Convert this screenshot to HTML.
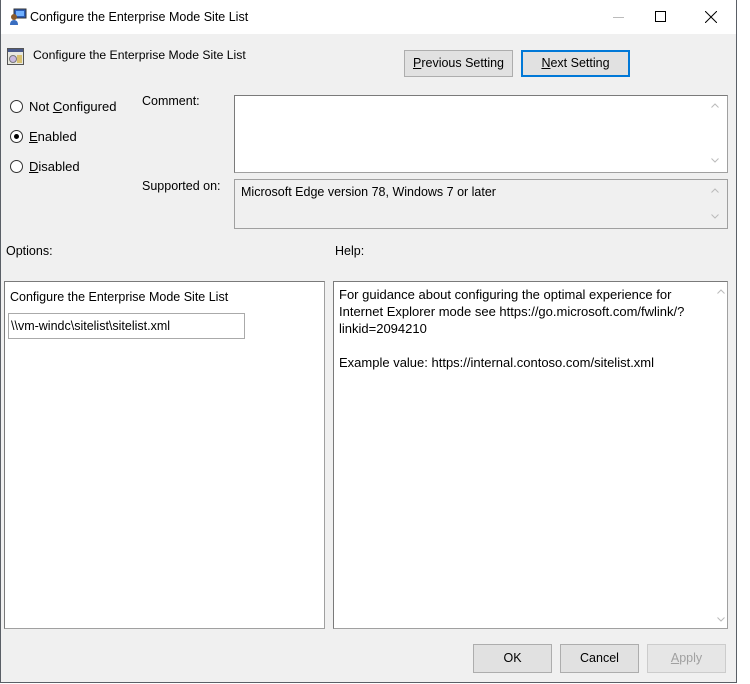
<!DOCTYPE html>
<html><head><meta charset="utf-8"><style>
*{box-sizing:border-box;margin:0;padding:0}
body{width:750px;height:684px;background:#fff;position:relative;overflow:hidden;font-family:"Liberation Sans",sans-serif;font-size:12px;color:#000}
.a{position:absolute}
.win{left:0;top:0;width:737px;height:683px;border:1px solid #5a5f66;border-top:none;background:#f0f0f0}
.tb{left:1px;top:0;width:735px;height:34px;background:#fff}
.btn{position:absolute;background:#e1e1e1;border:1px solid #adadad;text-align:center;line-height:25px;font-size:12.5px}
.box{position:absolute;background:#fff;border:1px solid #7a7a7a;border-right-color:#a0a0a0;border-bottom-color:#a0a0a0}
.rad{position:absolute;width:13px;height:13px;border:1px solid #333;border-radius:50%;background:#fff}
.lbl{position:absolute;font-size:12.5px;white-space:nowrap}
.sc{position:absolute}
u{text-decoration:underline}
</style></head><body>
<div class="a win"></div>
<div class="a tb"></div>
<svg class="a" style="left:9px;top:8px" width="18" height="18" viewBox="0 0 18 18"><rect x="5" y="1" width="12" height="9" fill="#2a5bb8" stroke="#333"/><rect x="7" y="3" width="8" height="5" fill="#6fb0ff"/><circle cx="5" cy="9" r="3" fill="#8a5a2a"/><path d="M1 17 Q1 12 5 12 Q9 12 9 17Z" fill="#3a6ec0"/></svg>
<div class="lbl" style="left:30px;top:10px;font-size:12.5px">Configure the Enterprise Mode Site List</div>
<div class="a" style="left:613px;top:17px;width:11px;height:1px;background:#bbb"></div>
<div class="a" style="left:655px;top:11px;width:11px;height:11px;border:1px solid #000"></div>
<svg class="a" style="left:705px;top:11px" width="12" height="12"><path d="M0 0L12 12M12 0L0 12" stroke="#000" stroke-width="1"/></svg>
<svg class="a" style="left:7px;top:48px" width="18" height="18" viewBox="0 0 18 18"><rect x="0.5" y="0.5" width="16" height="16" fill="#e8e8e0" stroke="#555"/><rect x="1" y="1" width="15" height="3" fill="#4a5a8a"/><circle cx="6" cy="11" r="3.5" fill="#c9b9e0" stroke="#777"/><rect x="10" y="7" width="5" height="8" fill="#d8c070"/></svg>
<div class="lbl" style="left:33px;top:48px;font-size:12.2px">Configure the Enterprise Mode Site List</div>
<div class="btn" style="left:404px;top:50px;width:109px;height:27px"><u>P</u>revious Setting</div>
<div class="btn" style="left:521px;top:50px;width:109px;height:27px;border:2px solid #0078d7;line-height:23px"><u>N</u>ext Setting</div>
<div class="rad" style="left:10px;top:100px"></div>
<div class="lbl" style="left:29px;top:99px;font-size:13px">Not <u>C</u>onfigured</div>
<div class="rad" style="left:10px;top:130px"></div>
<div class="a" style="left:14px;top:134px;width:5px;height:5px;border-radius:50%;background:#000"></div>
<div class="lbl" style="left:29px;top:129px;font-size:13px"><u>E</u>nabled</div>
<div class="rad" style="left:10px;top:160px"></div>
<div class="lbl" style="left:29px;top:159px;font-size:13px"><u>D</u>isabled</div>
<div class="lbl" style="left:142px;top:94px">Comment:</div>
<div class="box" style="left:234px;top:95px;width:494px;height:78px"></div>
<svg class="sc" style="left:711px;top:103px" width="8" height="5"><path d="M0.5 4.5L4 1L7.5 4.5" stroke="#bbb" fill="none"/></svg>
<svg class="sc" style="left:711px;top:158px" width="8" height="5"><path d="M0.5 0.5L4 4L7.5 0.5" stroke="#bbb" fill="none"/></svg>
<div class="lbl" style="left:142px;top:179px">Supported on:</div>
<div class="box" style="left:234px;top:179px;width:494px;height:50px;background:#f0f0f0;border-color:#a0a0a0"></div>
<div class="lbl" style="left:241px;top:185px">Microsoft Edge version 78, Windows 7 or later</div>
<svg class="sc" style="left:711px;top:188px" width="8" height="5"><path d="M0.5 4.5L4 1L7.5 4.5" stroke="#bbb" fill="none"/></svg>
<svg class="sc" style="left:711px;top:214px" width="8" height="5"><path d="M0.5 0.5L4 4L7.5 0.5" stroke="#bbb" fill="none"/></svg>
<div class="lbl" style="left:6px;top:244px">Options:</div>
<div class="lbl" style="left:335px;top:244px">Help:</div>
<div class="box" style="left:4px;top:281px;width:321px;height:348px"></div>
<div class="lbl" style="left:10px;top:290px">Configure the Enterprise Mode Site List</div>
<div class="box" style="left:8px;top:313px;width:237px;height:26px;border-color:#aaa"></div>
<div class="lbl" style="left:11px;top:319px">\\vm-windc\sitelist\sitelist.xml</div>
<div class="box" style="left:333px;top:281px;width:395px;height:348px"></div>
<div class="lbl" style="left:339px;top:286px;line-height:17px;font-size:13px">For guidance about configuring the optimal experience for<br>Internet Explorer mode see https://go.microsoft.com/fwlink/?<br>linkid=2094210<br><br>Example value: https://internal.contoso.com/sitelist.xml</div>
<svg class="sc" style="left:717px;top:289px" width="8" height="5"><path d="M0.5 4.5L4 1L7.5 4.5" stroke="#bbb" fill="none"/></svg>
<svg class="sc" style="left:717px;top:617px" width="8" height="5"><path d="M0.5 0.5L4 4L7.5 0.5" stroke="#bbb" fill="none"/></svg>
<div class="btn" style="left:473px;top:644px;width:79px;height:29px;line-height:27px">OK</div>
<div class="btn" style="left:560px;top:644px;width:79px;height:29px;line-height:27px">Cancel</div>
<div class="btn" style="left:647px;top:644px;width:79px;height:29px;line-height:27px;color:#a0a0a0;background:#e6e6e6;border-color:#ccc"><u>A</u>pply</div>
</body></html>
